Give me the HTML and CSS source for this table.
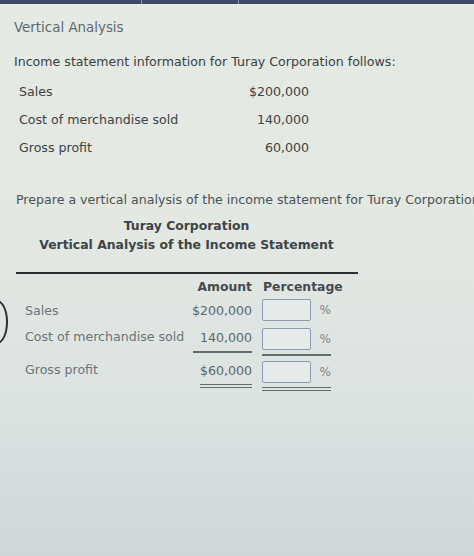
FILE: index.html
```html
<!DOCTYPE html>
<html>
<head>
<meta charset="utf-8">
<link rel="stylesheet" href="styles.css">
</head>
<body>
<div class="topbar"><span class="seg seg1"></span><span class="seg seg2"></span><span class="seg seg3"></span></div>
<div class="bezel"></div>
<main class="page">
  <h1 class="title">Vertical Analysis</h1>
  <p class="intro">Income statement information for Turay Corporation follows:</p>
  <div class="info">
    <span class="info-label">Sales</span><span class="info-val">$200,000</span>
    <span class="info-label">Cost of merchandise sold</span><span class="info-val">140,000</span>
    <span class="info-label">Gross profit</span><span class="info-val">60,000</span>
  </div>
  <p class="prepare">Prepare a vertical analysis of the income statement for Turay Corporation.</p>
  <div class="heading">
    <div class="h-co">Turay Corporation</div>
    <div class="h-st">Vertical Analysis of the Income Statement</div>
  </div>
  <div class="rule"></div>
  <div class="va">
    <span></span><span class="col-h amt-h">Amount</span><span class="col-h pct-h">Percentage</span>
    <span class="lab">Sales</span><span class="amt">$200,000</span><span class="pct"><span class="box"></span><span class="sign">%</span></span>
    <span class="lab">Cost of merchandise sold</span><span class="amt single">140,000</span><span class="pct single"><span class="box"></span><span class="sign">%</span></span>
    <span class="lab">Gross profit</span><span class="amt double">$60,000</span><span class="pct double"><span class="box"></span><span class="sign">%</span></span>
  </div>
</main>
</body>
</html>
```
FILE: styles.css
```css
html, body {
  margin: 0;
  padding: 0;
}
body {
  width: 474px;
  height: 556px;
  overflow: hidden;
  position: relative;
  font-family: "DejaVu Sans", Verdana, sans-serif;
  font-size: 12.6px;
  color: #3e4548;
  background: linear-gradient(180deg, #e5eae4 0%, #e3e8e3 40%, #dde3e1 70%, #d1d7d8 100%);
}
.topbar {
  height: 4px;
  background: #3d4a63;
  display: flex;
}
.seg { display: block; height: 4px; }
.seg1 { width: 141px; }
.seg2 { width: 96px; border-left: 1px solid #8a95a8; }
.seg3 { flex: 1; border-left: 1px solid #8a95a8; }
.bezel {
  position: absolute;
  left: -14px;
  top: 300px;
  width: 18px;
  height: 40px;
  border: 2px solid #2a2f33;
  border-radius: 50%;
}
.page {
  padding: 0 0 0 14px;
}
.title {
  margin: 14px 0 0;
  font-size: 13.4px;
  font-weight: normal;
  color: #5e686c;
  line-height: 20px;
}
.intro {
  margin: 14px 0 0;
  line-height: 20px;
  color: #3a4044;
}
.info {
  display: grid;
  grid-template-columns: 185px 105px;
  grid-auto-rows: 28px;
  align-items: center;
  margin: 5px 0 0 5px;
  color: #3c4246;
}
.info-val { text-align: right; }
.prepare {
  margin: 29px 0 0 2px;
  white-space: nowrap;
  line-height: 20px;
  color: #4a5256;
}
.heading {
  width: 345px;
  text-align: center;
  font-weight: bold;
  font-size: 12.4px;
  color: #3c4448;
  line-height: 19px;
  margin-top: 6px;
}
.rule {
  width: 342px;
  height: 2px;
  margin: 18px 0 0 2px;
  background: #2b3033;
}
.va {
  display: grid;
  grid-template-columns: 159px 68px 80px;
  margin: 3px 0 0 11px;
  color: #6b7478;
}
.col-h {
  font-weight: bold;
  font-size: 12.4px;
  color: #444b50;
  height: 20px;
  line-height: 20px;
}
.amt-h { text-align: right; }
.pct-h { padding-left: 11px; }
.lab, .amt { height: 26px; display: flex; align-items: center; white-space: nowrap; }
.amt { justify-content: flex-end; color: #5c6569; }
.pct {
  display: flex;
  align-items: center;
  height: 26px;
  margin-left: 10px;
  width: 69px;
}
.box {
  display: block;
  width: 48px;
  height: 20px;
  border: 1px solid #8d9bb0;
  border-radius: 2px;
  background: #e6ebea;
}
.sign { margin-left: 9px; color: #7b8488; font-size: 12px; }
.amt.single { border-bottom: 2px solid #646b6f; margin-left: 9px; height: 28px; }
.pct.single { border-bottom: 2px solid #646b6f; height: 31px; }
.amt.double, .pct.double { border-bottom: 4px double #646b6f; }
.amt.double { margin-left: 16px; height: 28px; }
.pct.double { height: 31px; }
```
